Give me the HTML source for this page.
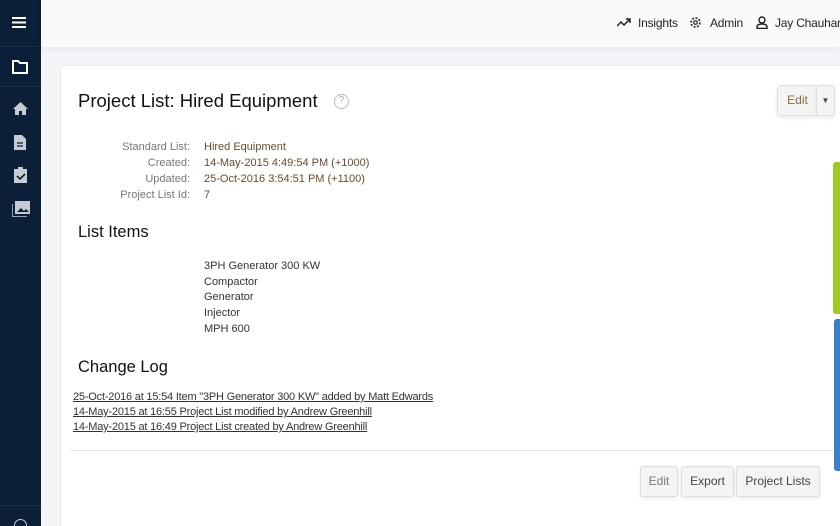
<!DOCTYPE html>
<html style="width:840px;height:526px;overflow:hidden"><head><style>
*{margin:0;padding:0;box-sizing:border-box}
body{width:840px;height:526px;overflow:hidden;background:#f4f5f8;font-family:"Liberation Sans",sans-serif;position:relative;color:#222}
.side{position:absolute;left:0;top:0;width:41px;height:526px;background:#0b2038}
.side .sep{position:absolute;left:0;width:41px;height:1px;background:#1a2f47}
.top{position:absolute;left:41px;top:0;right:0;height:47px;background:#f9fafc;box-shadow:0 2px 6px rgba(0,0,0,.06)}
.nav{position:absolute;top:16px;font-size:12px;color:#222;white-space:nowrap;letter-spacing:-.2px}
.card{position:absolute;left:60px;top:65px;width:790px;height:461px;background:#fff;border:1px solid #e6e8ec;border-bottom:none;border-radius:3px 3px 0 0}
.abs{position:absolute}
h1{position:absolute;left:17px;top:24px;font-size:18.5px;font-weight:normal;color:#111}
h2{position:absolute;left:17px;font-size:16.5px;font-weight:normal;color:#111}
.lbl{position:absolute;width:129px;text-align:right;font-size:11px;color:#777;left:0}
.val{position:absolute;left:143px;font-size:11px;color:#6b4a2a}
.it{position:absolute;left:143px;font-size:11px;color:#333}
.log{position:absolute;left:12px;font-size:11px;color:#333;text-decoration:underline;letter-spacing:-.2px;white-space:nowrap}
.btn{position:absolute;height:31px;background:#f4f4f4;border:1px solid #ddd;border-radius:3px;font-size:12px;color:#444;text-align:center;line-height:29px;box-shadow:0 2px 4px rgba(0,0,0,.08)}
</style></head><body>
<div class="side">
 <svg class="abs" style="left:12px;top:17px" width="14" height="11"><g fill="#fff"><rect y="0" width="14" height="2"/><rect y="4.5" width="14" height="2"/><rect y="9" width="14" height="2"/></g></svg>
 <div class="sep" style="top:46px"></div>
 <svg class="abs" style="left:12px;top:60px" width="16" height="14"><path d="M1 1h5l2 2h7v10H1z" fill="none" stroke="#fff" stroke-width="2"/></svg>
 <div class="sep" style="top:86px"></div>
 <svg class="abs" style="left:13px;top:102px" width="15" height="13"><path d="M7.5 0L0 7h2v6h4V9h3v4h4V7h2z" fill="#c7ccd3"/></svg>
 <svg class="abs" style="left:14px;top:135px" width="12" height="15"><path d="M0 0h8l4 4v11H0z" fill="#c7ccd3"/><path d="M3 8h6M3 11h6" stroke="#0b2038" stroke-width="1.3"/></svg>
 <svg class="abs" style="left:14px;top:167px" width="13" height="16"><path d="M0 2h4V0h5v2h4v14H0z" fill="#c7ccd3"/><path d="M3 9l3 3 5-5" stroke="#0b2038" stroke-width="1.6" fill="none"/></svg>
 <svg class="abs" style="left:12px;top:201px" width="18" height="16"><path d="M3 0h15v13H3z" fill="#c7ccd3"/><path d="M0 3v13h15" stroke="#c7ccd3" stroke-width="1.5" fill="none"/><path d="M5 11l4-4 3 3 2-2 3 3z" fill="#0b2038"/></svg>
 <div class="sep" style="top:505px"></div>
 <div class="abs" style="left:14px;top:519px;width:13px;height:13px;border:1.5px solid #c7ccd3;border-radius:50%"></div>
</div>
<div class="top">
 <svg class="abs" style="left:576px;top:18px" width="14" height="9"><path d="M0 8l4-4 3 3 6-6M9 1h4v4" stroke="#222" stroke-width="1.5" fill="none"/></svg>
 <div class="nav" style="left:597px">Insights</div>
 <svg class="abs" style="left:648px;top:16px" width="13" height="13"><circle cx="6.5" cy="6.5" r="4.5" fill="none" stroke="#222" stroke-width="1.6" stroke-dasharray="2 1.5"/><circle cx="6.5" cy="6.5" r="1.8" fill="none" stroke="#222" stroke-width="1.2"/></svg>
 <div class="nav" style="left:669px">Admin</div>
 <svg class="abs" style="left:715px;top:16px" width="12" height="13"><circle cx="6" cy="4" r="3" fill="none" stroke="#222" stroke-width="1.4"/><path d="M1 12.5v-1.5c0-2 2-3 5-3s5 1 5 3v1.5z" fill="none" stroke="#222" stroke-width="1.4"/></svg>
 <div class="nav" style="left:734px">Jay Chauhan</div>
</div>
<div class="card">
 <h1>Project List: Hired Equipment</h1>
 <div class="abs" style="left:273px;top:28px;width:15px;height:15px;border:1.5px solid #bbb;border-radius:50%;font-size:10px;color:#aaa;text-align:center;line-height:12px">?</div>
 <div class="btn" style="left:716px;top:19px;width:41px;color:#8a6a3a">Edit</div>
 <div class="btn" style="left:755px;top:19px;width:19px;font-size:8px">▼</div>
 <div class="lbl" style="top:75px">Standard List:</div><div class="val" style="top:75px">Hired Equipment</div>
 <div class="lbl" style="top:91px">Created:</div><div class="val" style="top:91px">14-May-2015 4:49:54 PM (+1000)</div>
 <div class="lbl" style="top:107px">Updated:</div><div class="val" style="top:107px">25-Oct-2016 3:54:51 PM (+1100)</div>
 <div class="lbl" style="top:123px">Project List Id:</div><div class="val" style="top:123px">7</div>
 <h2 style="top:157px">List Items</h2>
 <div class="it" style="top:194px">3PH Generator 300 KW</div>
 <div class="it" style="top:210px">Compactor</div>
 <div class="it" style="top:225px">Generator</div>
 <div class="it" style="top:241px">Injector</div>
 <div class="it" style="top:257px">MPH 600</div>
 <h2 style="top:292px">Change Log</h2>
 <div class="log" style="top:325px">25-Oct-2016 at 15:54 Item "3PH Generator 300 KW" added by Matt Edwards</div>
 <div class="log" style="top:340px">14-May-2015 at 16:55 Project List modified by Andrew Greenhill</div>
 <div class="log" style="top:355px">14-May-2015 at 16:49 Project List created by Andrew Greenhill</div>
 <div class="abs" style="left:9px;top:384px;width:790px;height:1px;background:#e2e2e2"></div>
 <div class="btn" style="left:579px;top:400px;width:38px;color:#777">Edit</div>
 <div class="btn" style="left:620px;top:400px;width:53px">Export</div>
 <div class="btn" style="left:675px;top:400px;width:84px">Project Lists</div>
</div>
<div class="abs" style="left:833px;top:162px;width:10px;height:152px;background:#9dcb23;border-radius:3px"></div>
<div class="abs" style="left:834px;top:319px;width:10px;height:152px;background:#3b80c9;border-radius:3px"></div>
</body></html>
